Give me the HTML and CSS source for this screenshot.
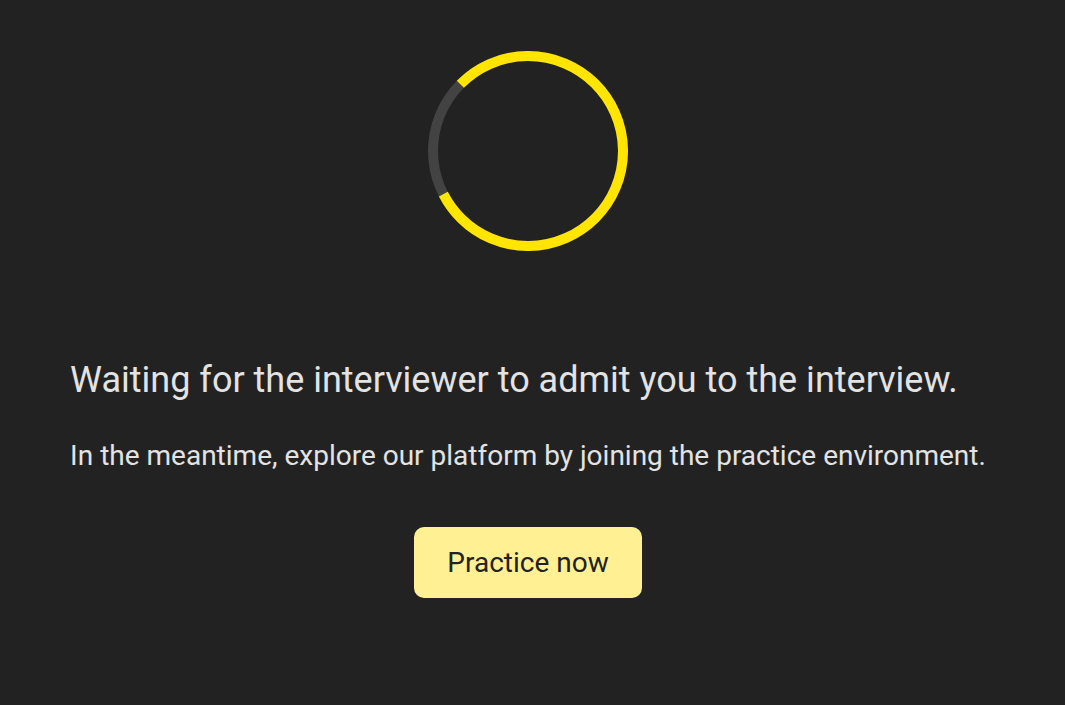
FILE: index.html
```html
<!DOCTYPE html>
<html lang="en">
<head>
<meta charset="utf-8">
<title>Waiting room</title>
<link rel="stylesheet" href="styles.css">
</head>
<body>
<main class="page">
  <div class="spinner">
    <svg width="200" height="200" viewBox="0 0 200 200" aria-hidden="true">
      <circle class="track" cx="100" cy="100" r="95"></circle>
      <circle class="arc" cx="100" cy="100" r="95" transform="rotate(224.6 100 100)"></circle>
    </svg>
  </div>
  <section class="message">
    <h1 class="title">Waiting for the interviewer to admit you to the interview.</h1>
    <p class="subtitle">In the meantime, explore our platform by joining the practice environment.</p>
  </section>
  <button class="practice-btn" type="button">Practice now</button>
</main>
</body>
</html>
```

FILE: styles.css
```css
html, body {
  margin: 0;
  padding: 0;
  height: 100%;
  background: #222222;
}
body {
  font-family: Roboto, "Noto Sans", sans-serif;
  color: #e3e3e3;
}
.page {
  display: flex;
  flex-direction: column;
  align-items: center;
  padding-top: 51px;
  padding-right: 9px;
}
.spinner {
  width: 200px;
  height: 200px;
}
.spinner svg {
  display: block;
}
.track {
  fill: none;
  stroke: #434343;
  stroke-width: 10;
}
.arc {
  fill: none;
  stroke: #ffe500;
  stroke-width: 10;
  stroke-dasharray: 477.5 600;
}
.message {
  margin-top: 108px;
  width: fit-content;
}
.title {
  margin: 0;
  font-size: 36px;
  font-weight: 400;
  line-height: 43px;
}
.subtitle {
  margin: 37px 0 0;
  font-size: 28px;
  font-weight: 400;
  line-height: 34px;
}
.practice-btn {
  margin-top: 54px;
  width: 228px;
  height: 71px;
  border: none;
  border-radius: 10px;
  background: #fff094;
  color: #222222;
  font-family: Roboto, "Noto Sans", sans-serif;
  font-size: 28px;
  cursor: pointer;
}
```
